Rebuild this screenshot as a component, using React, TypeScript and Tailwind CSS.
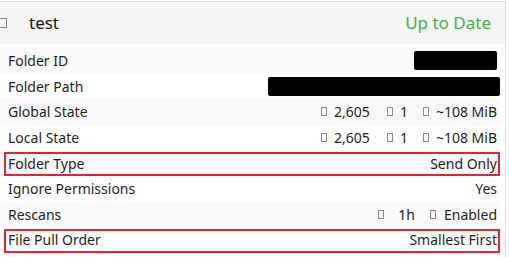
const Tofu = ({ className = "" }: { className?: string }) => (
  <span
    className={`inline-block w-[6px] h-[9px] border border-[#8a8a8a] ${className}`}
  />
);

const Redacted = ({ width }: { width: string }) => (
  <span className={`inline-block h-[19px] rounded-[2px] bg-black ${width}`} />
);

const StateValue = () => (
  <span className="flex items-center">
    <Tofu className="mr-[7px]" />
    <span className="mr-[17px]">2,605</span>
    <Tofu className="mr-[7px]" />
    <span className="mr-[15px]">1</span>
    <Tofu className="mr-[7px]" />
    <span>~108 MiB</span>
  </span>
);

const rows = [
  { label: "Folder ID", value: <Redacted width="w-[83px]" /> },
  { label: "Folder Path", value: <Redacted width="w-[232px] -mr-[3px]" /> },
  { label: "Global State", value: <StateValue /> },
  { label: "Local State", value: <StateValue /> },
  { label: "Folder Type", value: "Send Only", marked: true },
  { label: "Ignore Permissions", value: "Yes" },
  {
    label: "Rescans",
    value: (
      <span className="flex items-center">
        <Tofu className="mr-[14px]" />
        <span className="mr-[15px]">1h</span>
        <Tofu className="mr-[8px]" />
        <span>Enabled</span>
      </span>
    ),
  },
  { label: "File Pull Order", value: "Smallest First", marked: true },
];

export default function App() {
  return (
    <div
      className="w-[509px] h-[257px] bg-white overflow-hidden text-[#1e1e1e] text-[14px]"
      style={{ fontFamily: '"Segoe UI", "Noto Sans", sans-serif' }}
    >
      <div className="w-[506px] mt-[1px] border-t border-r border-[#dcdcdc]">
        <div className="h-[42px] bg-[#f5f5f5] flex items-center justify-between pr-[14px]">
          <div className="flex items-center">
            <span className="inline-block w-[7px] h-[10px] border border-[#8a8a8a] border-l-0" />
            <span className="ml-[22px] text-[17px] text-[#111]">test</span>
          </div>
          <span className="text-[17px] text-[#3cb43c]">Up to Date</span>
        </div>
        <div className="pt-[4px] pr-[5px] pb-[4px]">
          {rows.map((row, i) => (
            <div
              key={row.label}
              className={`relative h-[25.6px] flex items-center justify-between pl-[8px] pr-[3px] ${
                i % 2 === 0 ? "bg-[#f9f9f9]" : "bg-white"
              }`}
            >
              <span>{row.label}</span>
              <span className="flex items-center">{row.value}</span>
              {row.marked && (
                <div className="absolute left-[4px] right-0 top-[2px] bottom-0 border-2 border-[#e8232b]" />
              )}
            </div>
          ))}
        </div>
      </div>
    </div>
  );
}
